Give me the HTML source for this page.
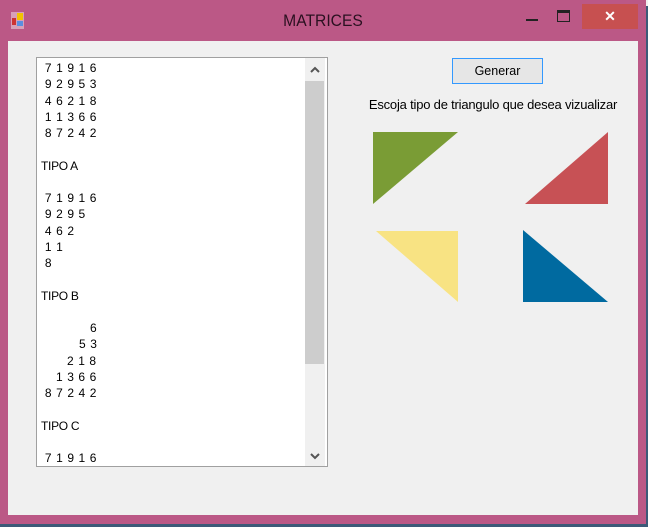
<!DOCTYPE html>
<html><head><style>
*{margin:0;padding:0;box-sizing:border-box}
body{width:648px;height:527px;background:#3c5a78;position:relative;overflow:hidden;font-family:"Liberation Sans",sans-serif}
#top{position:absolute;left:0;top:0;width:648px;height:6px;background:#f0f0f0}
#win{position:absolute;left:0;top:0;width:646px;height:524px;background:#bb5886}
#title{position:absolute;left:0;width:646px;top:11px;text-align:center;font-size:17px;color:#2a1020;transform:scaleX(0.92)}
#close{position:absolute;left:582px;top:4px;width:56px;height:25px;background:#c75050;color:#fff;text-align:center;font-size:14px;font-weight:bold;line-height:24px}
#client{position:absolute;left:8px;top:41px;width:630px;height:474px;background:#f0f0f0}
#tb{position:absolute;left:36px;top:57px;width:292px;height:410px;background:#fff;border:1px solid #a0a0a0;overflow:hidden}
#txt{position:absolute;left:4px;top:2px;font-size:12px;line-height:16.25px;color:#000;white-space:pre}
.d{letter-spacing:0.6px}
.t{letter-spacing:-0.3px}
#sb{position:absolute;left:305px;top:58px;width:20px;height:408px;background:#f0f0f0}
#thumb{position:absolute;left:305px;top:81px;width:19px;height:283px;background:#cdcdcd}
#btn{position:absolute;left:452px;top:58px;width:91px;height:26px;border:1px solid #3399ff;background:#e6e6e6;font-size:12.5px;text-align:center;line-height:24px}
#lbl{position:absolute;left:340px;top:97px;width:306px;text-align:center;font-size:13px;white-space:nowrap;letter-spacing:-0.2px}
</style></head><body>
<div id="top"></div>
<div id="win">
<svg style="position:absolute;left:11px;top:12px" width="14" height="20"><rect x="0" y="0" width="13" height="17" fill="#d7a0b8"/><rect x="1" y="6" width="4" height="7" fill="#c33"/><rect x="6" y="1" width="6" height="7" fill="#f2c200"/><rect x="6" y="9" width="6" height="5" fill="#5a8ee0"/></svg>
<div id="title">MATRICES</div>
<div style="position:absolute;left:526px;top:19px;width:12px;height:2px;background:#222"></div>
<div style="position:absolute;left:557px;top:10px;width:13px;height:12px;border:1px solid #222;border-top:3px solid #222"></div>
<div id="close">✕</div>
<div id="client"></div>
</div>
<div id="tb"><div id="txt"><span class="d"> 7 1 9 1 6
 9 2 9 5 3
 4 6 2 1 8
 1 1 3 6 6
 8 7 2 4 2</span>

<span class="t">TIPO A</span>

<span class="d"> 7 1 9 1 6
 9 2 9 5
 4 6 2
 1 1
 8</span>

<span class="t">TIPO B</span>

<span class="d" style="padding-left:49px">6</span>
<span class="d" style="padding-left:38px">5 3</span>
<span class="d" style="padding-left:26px">2 1 8</span>
<span class="d" style="padding-left:15px">1 3 6 6</span>
<span class="d"> 8 7 2 4 2</span>

<span class="t">TIPO C</span>

<span class="d"> 7 1 9 1 6</span></div></div>
<div id="sb"></div><div id="thumb"></div>
<svg style="position:absolute;left:309px;top:66px" width="12" height="8"><path d="M2 6 L6 2 L10 6" stroke="#555" stroke-width="2" fill="none"/></svg>
<svg style="position:absolute;left:309px;top:452px" width="12" height="8"><path d="M2 2 L6 6 L10 2" stroke="#555" stroke-width="2" fill="none"/></svg>
<div id="btn">Generar</div>
<div id="lbl">Escoja tipo de triangulo que desea vizualizar</div>
<svg style="position:absolute;left:0;top:0" width="648" height="527">
<polygon points="373,132 458,132 373,204" fill="#7a9c35"/>
<polygon points="608,132 608,204 525,204" fill="#c75155"/>
<polygon points="376,231 458,231 458,302" fill="#f8e383"/>
<polygon points="523,230 523,302 608,302" fill="#006aa0"/>
</svg>
</body></html>
